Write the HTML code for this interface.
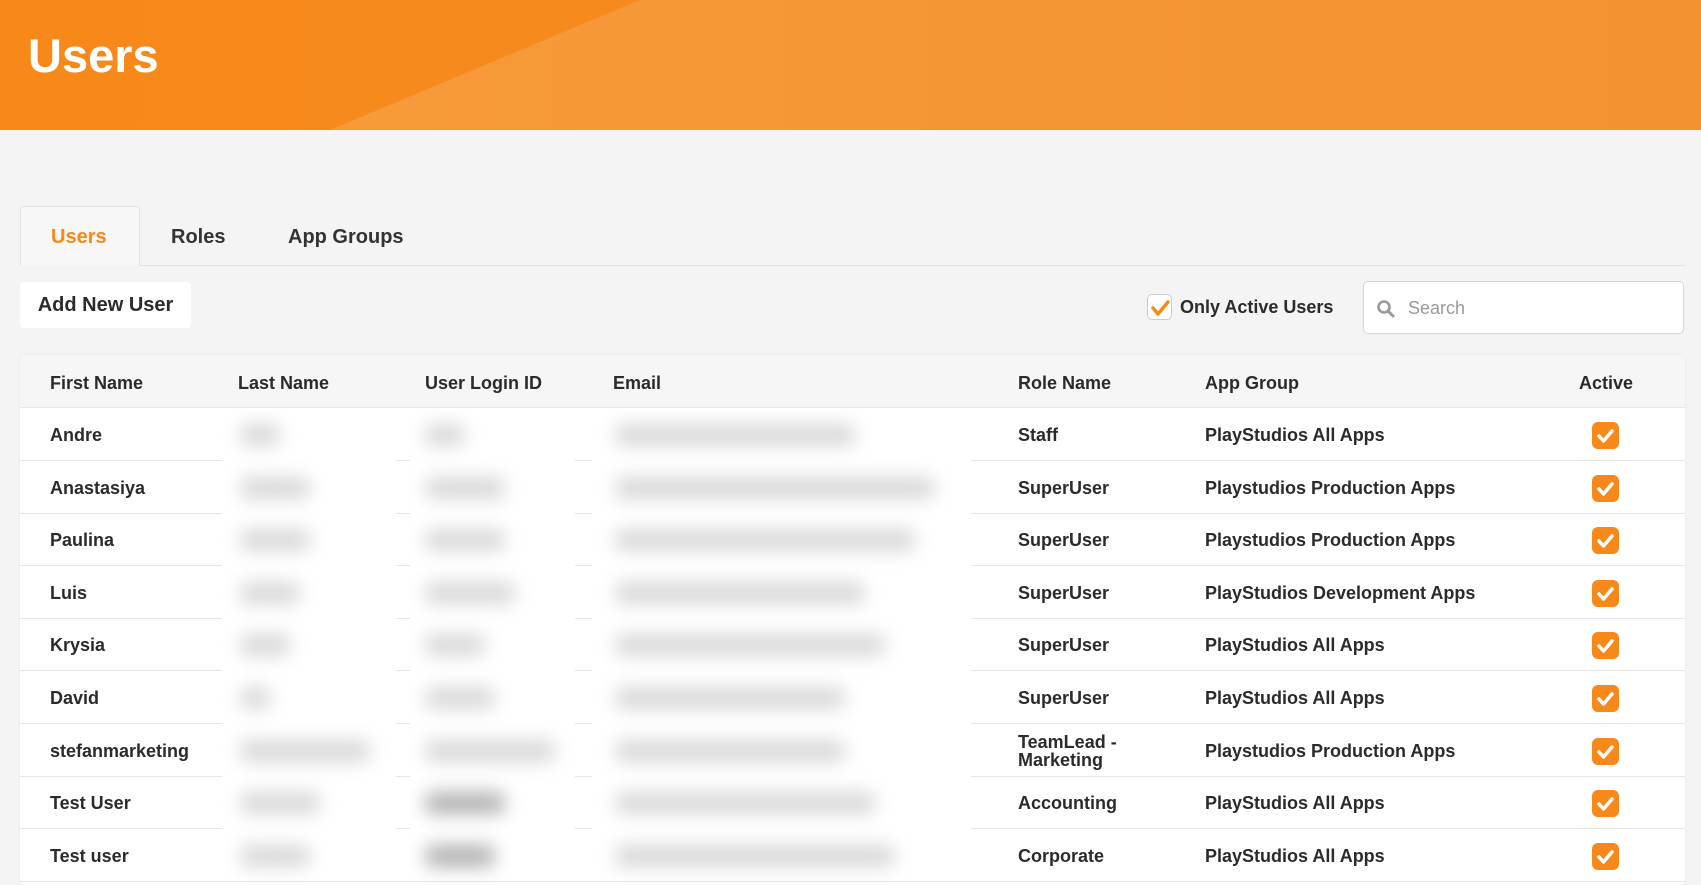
<!DOCTYPE html>
<html><head><meta charset="utf-8"><style>
*{margin:0;padding:0;box-sizing:border-box}
body{width:1701px;height:885px;overflow:hidden;background:#f4f4f4;font-family:"Liberation Sans",sans-serif;color:#2b2b2b;position:relative}
.hdr{position:absolute;left:0;top:0;width:1701px;height:130px;background:linear-gradient(90deg,#f7891a 0%,#f68d22 100%);overflow:hidden}
.hdr .tri{position:absolute;left:330px;top:0;width:1400px;height:130px;background:linear-gradient(90deg,#f79a3a,#f39232);clip-path:polygon(310px 0,100% 0,100% 100%,0 100%)}
.hdr h1{position:absolute;left:28px;top:28px;color:#fff;font-size:47px;font-weight:bold}
.abs{position:absolute}
.tab{font-size:20px;font-weight:bold;color:#333;top:226px}
.tabline{left:20px;top:265px;width:1665px;height:1px;background:#e2e2e2}
.acttab{left:20px;top:206px;width:120px;height:60px;background:#f7f7f7;border:1px solid #e2e2e2;border-bottom:none;border-radius:4px 4px 0 0}
.btn{left:20px;top:282px;width:171px;height:46px;background:#fff;border-radius:4px;font-size:20px;font-weight:bold;line-height:46px;text-align:center}
.cb{width:25px;height:26px;border-radius:5px;border:1px solid #ccc;background:#fff}
.search{left:1363px;top:281px;width:321px;height:53px;background:#fff;border:1px solid #d6d6d6;border-radius:5px}
.tbl{left:20px;top:355px;width:1665px;height:530px;background:#fff;border-radius:5px;box-shadow:0 0 3px rgba(0,0,0,.06)}
.th{top:355px;left:20px;width:1665px;height:53px;background:#f6f6f6;border-radius:5px 5px 0 0;border-bottom:1px solid #e6e6e6}
.hd{font-size:18px;font-weight:bold;top:373px}
.row{left:20px;width:1665px;height:1px;background:#e6e6e6}
.c{font-size:18px;font-weight:bold;color:#2b2b2b}
.ok{width:27px;height:27px;border-radius:6px;background:#f7891a}
.blur{background:#fff;top:412px;height:460px}
.bl{height:22px;background:#aaa;filter:blur(9px);opacity:.45;border-radius:8px}
</style></head><body>
<div class="hdr"><div class="tri"></div><h1>Users</h1></div>
<div class="abs tabline"></div>
<div class="abs acttab"></div>
<div class="abs tab" style="left:51px;color:#f7891a">Users</div>
<div class="abs tab" style="left:171px">Roles</div>
<div class="abs tab" style="left:288px">App Groups</div>
<div class="abs btn">Add New User</div>
<div class="abs cb" style="left:1147px;top:294px"><svg width="25" height="26" viewBox="0 0 25 26"><path d="M5 13l5 6 10-12" stroke="#f7891a" stroke-width="3.5" fill="none" stroke-linecap="round" stroke-linejoin="round"/></svg></div>
<div class="abs" style="left:1180px;top:297px;font-size:18px;font-weight:bold">Only Active Users</div>
<div class="abs search"><svg class="abs" style="left:12px;top:17px" width="20" height="20" viewBox="0 0 20 20"><circle cx="8" cy="8" r="5.5" stroke="#999" stroke-width="2.6" fill="none"/><path d="M12 12l5 5" stroke="#999" stroke-width="3" stroke-linecap="round"/></svg><div class="abs" style="left:44px;top:16px;font-size:18px;color:#999">Search</div></div>
<div class="abs tbl"></div>
<div class="abs th"></div>
<div class="abs hd" style="left:50px">First Name</div>
<div class="abs hd" style="left:238px">Last Name</div>
<div class="abs hd" style="left:425px">User Login ID</div>
<div class="abs hd" style="left:613px">Email</div>
<div class="abs hd" style="left:1018px">Role Name</div>
<div class="abs hd" style="left:1205px">App Group</div>
<div class="abs hd" style="left:1579px">Active</div>
<div id="rows"></div>
<script>
var d=[["Andre","Staff","PlayStudios All Apps"],["Anastasiya","SuperUser","Playstudios Production Apps"],["Paulina","SuperUser","Playstudios Production Apps"],["Luis","SuperUser","PlayStudios Development Apps"],["Krysia","SuperUser","PlayStudios All Apps"],["David","SuperUser","PlayStudios All Apps"],["stefanmarketing","TeamLead -<br>Marketing","Playstudios Production Apps"],["Test User","Accounting","PlayStudios All Apps"],["Test user","Corporate","PlayStudios All Apps"]];
var h="";
for(var i=0;i<9;i++){var y=408+i*52.6;
h+='<div class="abs row" style="top:'+(y+52)+'px"></div>';
var ty=y+17;
h+='<div class="abs c" style="left:50px;top:'+ty+'px">'+d[i][0]+'</div>';
if(i==6)h+='<div class="abs c" style="left:1018px;top:'+(y+9)+'px;line-height:18px">'+d[i][1]+'</div>';
else h+='<div class="abs c" style="left:1018px;top:'+ty+'px">'+d[i][1]+'</div>';
h+='<div class="abs c" style="left:1205px;top:'+ty+'px">'+d[i][2]+'</div>';
h+='<div class="abs ok" style="left:1592px;top:'+(y+14)+'px"><svg width="27" height="27" viewBox="0 0 27 27"><path d="M7 14l4.5 5L20 9" stroke="#fff" stroke-width="3.5" fill="none" stroke-linecap="round" stroke-linejoin="round"/></svg></div>';
}
h+='<div class="abs blur" style="left:222px;width:174px"></div><div class="abs blur" style="left:410px;width:165px"></div><div class="abs blur" style="left:592px;width:379px"></div>';
var w1=[40,70,70,60,50,30,130,80,70],w2=[40,80,80,90,60,70,130,80,70],w3=[240,320,300,250,270,230,230,260,280];
for(var i=0;i<9;i++){var y=408+i*52.6+16;
h+='<div class="abs bl" style="left:240px;top:'+y+'px;width:'+w1[i]+'px"></div>';
h+='<div class="abs bl" style="left:425px;top:'+y+'px;width:'+w2[i]+'px'+(i>6?';background:#555':'')+'"></div>';
h+='<div class="abs bl" style="left:615px;top:'+y+'px;width:'+w3[i]+'px"></div>';}
document.getElementById("rows").innerHTML=h;
</script>
</body></html>
